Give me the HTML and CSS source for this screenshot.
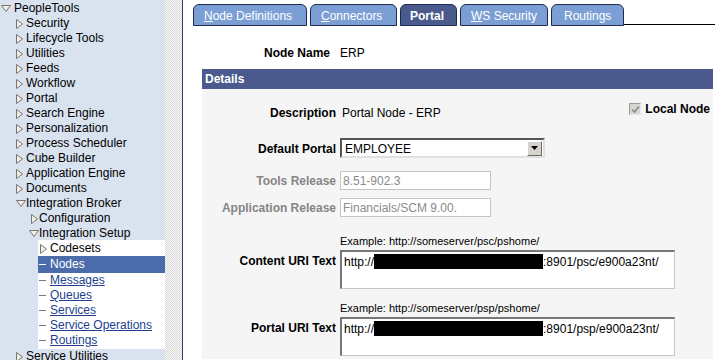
FILE: index.html
```html
<!DOCTYPE html>
<html lang="en">
<head>
<meta charset="UTF-8">
<title>Nodes - Portal</title>
<link rel="stylesheet" href="styles.css">
</head>
<body>
<div class="page">
    <nav class="tree">
        <ul>
            <li class="l0"><span class="ic"><svg class="open" width="10" height="7" viewBox="0 0 10 7"><path d="M.5 .5H9.5L5 6.5Z"/></svg></span>PeopleTools</li>
            <li class="l1"><span class="ic"><svg width="7" height="10" viewBox="0 0 7 10"><path d="M.5 .5L6.5 5L.5 9.5Z"/></svg></span>Security</li>
            <li class="l1"><span class="ic"><svg width="7" height="10" viewBox="0 0 7 10"><path d="M.5 .5L6.5 5L.5 9.5Z"/></svg></span>Lifecycle Tools</li>
            <li class="l1"><span class="ic"><svg width="7" height="10" viewBox="0 0 7 10"><path d="M.5 .5L6.5 5L.5 9.5Z"/></svg></span>Utilities</li>
            <li class="l1"><span class="ic"><svg width="7" height="10" viewBox="0 0 7 10"><path d="M.5 .5L6.5 5L.5 9.5Z"/></svg></span>Feeds</li>
            <li class="l1"><span class="ic"><svg width="7" height="10" viewBox="0 0 7 10"><path d="M.5 .5L6.5 5L.5 9.5Z"/></svg></span>Workflow</li>
            <li class="l1"><span class="ic"><svg width="7" height="10" viewBox="0 0 7 10"><path d="M.5 .5L6.5 5L.5 9.5Z"/></svg></span>Portal</li>
            <li class="l1"><span class="ic"><svg width="7" height="10" viewBox="0 0 7 10"><path d="M.5 .5L6.5 5L.5 9.5Z"/></svg></span>Search Engine</li>
            <li class="l1"><span class="ic"><svg width="7" height="10" viewBox="0 0 7 10"><path d="M.5 .5L6.5 5L.5 9.5Z"/></svg></span>Personalization</li>
            <li class="l1"><span class="ic"><svg width="7" height="10" viewBox="0 0 7 10"><path d="M.5 .5L6.5 5L.5 9.5Z"/></svg></span>Process Scheduler</li>
            <li class="l1"><span class="ic"><svg width="7" height="10" viewBox="0 0 7 10"><path d="M.5 .5L6.5 5L.5 9.5Z"/></svg></span>Cube Builder</li>
            <li class="l1"><span class="ic"><svg width="7" height="10" viewBox="0 0 7 10"><path d="M.5 .5L6.5 5L.5 9.5Z"/></svg></span>Application Engine</li>
            <li class="l1"><span class="ic"><svg width="7" height="10" viewBox="0 0 7 10"><path d="M.5 .5L6.5 5L.5 9.5Z"/></svg></span>Documents</li>
            <li class="l1"><span class="ic"><svg class="open" width="10" height="7" viewBox="0 0 10 7"><path d="M.5 .5H9.5L5 6.5Z"/></svg></span>Integration Broker</li>
            <li class="l2"><span class="ic"><svg class="shut" width="7" height="10" viewBox="0 0 7 10"><path d="M.5 .5L6.5 5L.5 9.5Z"/></svg></span>Configuration</li>
            <li class="l2"><span class="ic"><svg class="open" width="10" height="7" viewBox="0 0 10 7"><path d="M.5 .5H9.5L5 6.5Z"/></svg></span>Integration Setup</li>
            <li class="box">
                <ul>
                    <li class="first"><span class="ic"><svg class="shut" width="7" height="10" viewBox="0 0 7 10"><path d="M.5 .5L6.5 5L.5 9.5Z"/></svg></span>Codesets</li>
                    <li class="sel"><span class="ic"><span class="dash"></span></span>Nodes</li>
                    <li><span class="ic"><span class="dash"></span></span><a href="#">Messages</a></li>
                    <li><span class="ic"><span class="dash"></span></span><a href="#">Queues</a></li>
                    <li><span class="ic"><span class="dash"></span></span><a href="#">Services</a></li>
                    <li><span class="ic"><span class="dash"></span></span><a href="#">Service Operations</a></li>
                    <li><span class="ic"><span class="dash"></span></span><a href="#">Routings</a></li>
                </ul>
            </li>
            <li class="l1"><span class="ic"><svg width="7" height="10" viewBox="0 0 7 10"><path d="M.5 .5L6.5 5L.5 9.5Z"/></svg></span>Service Utilities</li>
        </ul>
    </nav>
    <div class="split"></div>

    <main class="content">
        <div class="tabs">
            <a class="tab t-node" href="#"><u>N</u>ode Definitions</a>
            <a class="tab t-conn" href="#"><u>C</u>onnectors</a>
            <a class="tab t-portal on" href="#">Portal</a>
            <a class="tab t-ws" href="#"><u>W</u>S Security</a>
            <a class="tab t-rout" href="#">Routings</a>
            <span class="tab-rest"></span>
        </div>

        <div class="keyrow">
            <span class="key">Node Name</span>
            <span>ERP</span>
        </div>

        <section class="details">
            <h2>Details</h2>
            <div class="panel">
                <div class="frow r-desc">
                    <span class="lbl">Description</span>
                    <div class="val">
                        <span class="desc">Portal Node - ERP</span>
                        <span class="local">
                            <span class="chk"><svg width="9" height="9" viewBox="0 0 9 9"><path d="M1 4.5L3.5 7L8 1.5"/></svg></span>
                            Local Node
                        </span>
                    </div>
                </div>

                <div class="frow r-portal">
                    <span class="lbl">Default Portal</span>
                    <div class="select">
                        <span>EMPLOYEE</span>
                        <span class="arrow"><svg width="7" height="4" viewBox="0 0 7 4"><path d="M0 0H7L3.5 4Z"/></svg></span>
                    </div>
                </div>

                <div class="frow r-tools">
                    <span class="lbl off">Tools Release</span>
                    <input class="field" type="text" value="8.51-902.3" disabled>
                </div>

                <div class="frow r-app">
                    <span class="lbl off">Application Release</span>
                    <input class="field" type="text" value="Financials/SCM 9.00." disabled>
                </div>

                <div class="frow uri r-content">
                    <span class="lbl">Content URI Text</span>
                    <div>
                        <div class="example">Example: http://someserver/psc/pshome/</div>
                        <div class="area">http://<span class="redact"></span>:8901/psc/e900a23nt/</div>
                    </div>
                </div>

                <div class="frow uri r-purl">
                    <span class="lbl">Portal URI Text</span>
                    <div>
                        <div class="example">Example: http://someserver/psp/pshome/</div>
                        <div class="area">http://<span class="redact"></span>:8901/psp/e900a23nt/</div>
                    </div>
                </div>
            </div>
        </section>
    </main>
</div>
</body>
</html>
```

FILE: styles.css
```css
html,
body {
    margin: 0;
    padding: 0;
    height: 360px;
    overflow: hidden;
    background: #fff;
}

body {
    font-family: "Liberation Sans", Arial, sans-serif;
    font-size: 12px;
    color: #000;
}

.page {
    display: flex;
    height: 360px;
}

/* left menu */
.tree {
    width: 165px;
    flex: none;
    padding-top: 1px;
    background: #d9e2ef;
    overflow: hidden;
}

.tree ul {
    list-style: none;
    margin: 0;
    padding: 0;
}

.tree li {
    display: flex;
    align-items: center;
    height: 15px;
    line-height: 15px;
    white-space: nowrap;
}

.tree .ic {
    display: inline-flex;
    align-items: center;
    flex: none;
}

.tree svg path {
    fill: #f3efe2;
    stroke: #767676;
    stroke-width: 1;
}

.l0 { padding-left: 1px; }
.l0 .ic { width: 13px; }

.l1 { padding-left: 16px; }
.l1 .ic { width: 10px; }

.l2 { padding-left: 29px; }
.l2 .ic { width: 10px; }
.l2 .shut { margin-left: 2px; }

.tree li.box {
    display: block;
    height: auto;
    margin-top: -1px;
    margin-left: 38px;
    padding-bottom: 1px;
    background: #fff;
}

.box li {
    padding-left: 1px;
}

.box .ic { width: 11px; }
.box .shut { margin-left: 1px; }

.box li.first {
    height: 16px;
    padding-top: 1px;
    box-sizing: border-box;
}

.box li.sel {
    height: 17px;
    background: #4b6baa;
    color: #fff;
}

.dash {
    display: block;
    width: 7px;
    height: 1px;
    background: #7a7a7a;
}

.sel .dash {
    background: #fff;
}

.box a {
    color: #233f8e;
    text-decoration: underline;
}

.split {
    width: 17px;
    flex: none;
    background: repeating-conic-gradient(#d6d6d6 0 25%, #fbfbfb 0 50%) 0 0 / 2px 2px;
    border-right: 1px solid #2e3a8c;
}

/* right side */
.content {
    flex: 1;
    padding-top: 4px;
}

.tabs {
    display: flex;
    align-items: flex-end;
    height: 22px;
    padding-left: 10px;
}

.tab {
    box-sizing: border-box;
    height: 22px;
    line-height: 22px;
    padding-left: 10px;
    margin-right: 3px;
    background: #7b9fd5;
    color: #fff;
    font-size: 12px;
    text-decoration: none;
    white-space: nowrap;
    overflow: hidden;
    border: 1px solid #1f2b4f;
    border-radius: 6px 6px 0 0;
}

.t-node { width: 114px; }
.t-conn { width: 87px; }
.t-portal { width: 57px; padding-left: 9px; }
.t-ws { width: 88px; }
.t-rout { width: 73px; padding-left: 12px; }

.tab u {
    text-decoration: underline;
}

.tab.on {
    background: #4a5a8c;
    font-weight: bold;
}

.tab-rest {
    flex: 1;
    height: 1px;
    margin-left: -3px;
    margin-bottom: 1px;
    background: #000;
}

.keyrow {
    display: flex;
    margin-top: 19px;
    line-height: 16px;
}

.key {
    width: 147px;
    margin-right: 10px;
    text-align: right;
    font-weight: bold;
}

.details {
    margin: 8px 2px 0 19px;
}

.details h2 {
    margin: 0;
    height: 20px;
    line-height: 21px;
    padding-left: 3px;
    background: #4a5a8c;
    color: #fff;
    font-size: 12px;
    font-weight: bold;
}

.panel {
    background: #f5f5f5;
    padding: 0 0 3px 0;
    overflow: hidden;
}

.frow {
    display: flex;
    align-items: center;
}

.lbl {
    width: 134px;
    margin-right: 4px;
    flex: none;
    text-align: right;
    font-weight: bold;
    line-height: 16px;
    white-space: nowrap;
}

.lbl.off {
    color: #858585;
}

.r-desc {
    margin-top: 11px;
    align-items: flex-start;
}

.r-desc .lbl {
    padding-top: 5px;
}

.val {
    flex: 1;
    display: flex;
    justify-content: space-between;
    align-items: flex-start;
    line-height: 16px;
}

.desc {
    padding-top: 5px;
    padding-left: 2px;
}

.local {
    display: flex;
    align-items: center;
    gap: 4px;
    margin-top: 1px;
    margin-right: 3px;
    font-weight: bold;
}

.chk {
    box-sizing: border-box;
    width: 12px;
    height: 12px;
    display: inline-flex;
    align-items: center;
    justify-content: center;
    background: #d8d6d0;
    border: 1px solid #9a9a9a;
    border-right-color: #e8e8e8;
    border-bottom-color: #e8e8e8;
}

.chk path {
    fill: none;
    stroke: #8a8a8a;
    stroke-width: 1.6;
}

.r-portal { margin-top: 17px; }

.r-portal .lbl {
    padding-top: 2px;
}

.select {
    box-sizing: border-box;
    width: 205px;
    height: 20px;
    display: flex;
    align-items: center;
    justify-content: space-between;
    padding: 1px 1px 0 3px;
    background: #fff;
    border: 2px solid #e0e0e0;
    border-top-color: #555;
    border-left-color: #555;
}

.arrow {
    box-sizing: border-box;
    width: 15px;
    height: 15px;
    margin-top: -1px;
    display: flex;
    align-items: center;
    justify-content: center;
    background: #d6d3cc;
    border: 1px solid #fff;
    border-right-color: #6a6a6a;
    border-bottom-color: #6a6a6a;
}

.arrow path {
    fill: #000;
}

.r-tools { margin-top: 13px; }
.r-app { margin-top: 8px; }

.field {
    box-sizing: border-box;
    width: 151px;
    height: 19px;
    margin: 0;
    padding: 1px 2px 0;
    font: 12px "Liberation Sans", Arial, sans-serif;
    color: #8a8a8a;
    background: #fff;
    border: 1px solid #c4c4c4;
}

.uri {
    align-items: flex-start;
}

.uri .lbl {
    padding-top: 20px;
    line-height: 14px;
}

.r-content { margin-top: 17px; }
.r-purl { margin-top: 12px; }

.example {
    font-size: 11px;
    line-height: 15px;
    margin-bottom: 1px;
}

.area {
    box-sizing: border-box;
    width: 335px;
    height: 39px;
    padding: 2px 2px 0;
    line-height: 16px;
    white-space: nowrap;
    background: #fff;
    border: 1px solid #c8c8c8;
    border-top: 2px solid #777;
    border-left: 2px solid #777;
}

.redact {
    display: inline-block;
    width: 169px;
    height: 15px;
    vertical-align: -3px;
    background: #000;
}
```
